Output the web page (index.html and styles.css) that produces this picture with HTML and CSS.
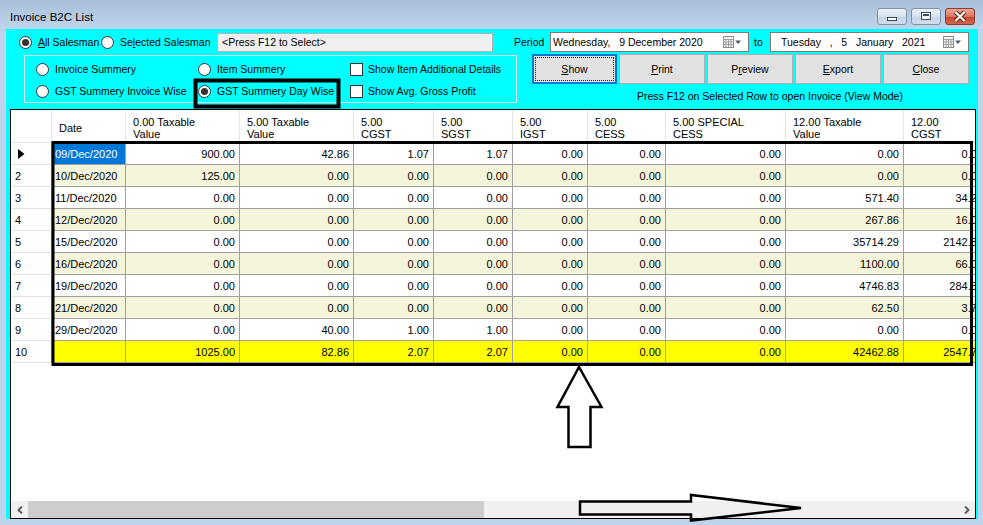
FILE: index.html
```html
<!DOCTYPE html>
<html>
<head>
<meta charset="utf-8">
<title>Invoice B2C List</title>
<link rel="stylesheet" href="styles.css">
</head>
<body>
<div class="window">
  <div class="titlebar">
    <span class="title">Invoice B2C List</span>
    <div class="caption">
      <div class="cbtn"><svg width="28" height="15" viewBox="0 0 28 15"><rect x="9.5" y="8.5" width="9" height="3" fill="#fff" stroke="#3a4a5e"/></svg></div>
      <div class="cbtn"><svg width="28" height="15" viewBox="0 0 28 15"><rect x="9.5" y="3.5" width="9" height="7" fill="#fff" stroke="#3a4a5e"/><rect x="11" y="5" width="6" height="2" fill="#3a4a5e"/></svg></div>
      <div class="cbtn close"><svg width="28" height="15" viewBox="0 0 28 15"><path d="M9.5 3 L18.5 12 M18.5 3 L9.5 12" stroke="#5b1c12" stroke-width="4.2"/><path d="M9.5 3 L18.5 12 M18.5 3 L9.5 12" stroke="#fff" stroke-width="2.2"/></svg></div>
    </div>
  </div>
  <div class="client">
    <div class="toprow">
      <label class="opt w1"><span class="radio on"></span><span><u>A</u>ll Salesman</span></label>
      <label class="opt w2"><span class="radio"></span><span>Se<u>l</u>ected Salesman</span></label>
      <div class="textbox">&lt;Press F12 to Select&gt;</div>
      <span class="period">Period</span>
      <div class="datebox"><span class="dtext d1">Wednesday,   9 December 2020</span><svg class="cal" width="19" height="12" viewBox="0 0 19 12"><rect x="0.5" y="0.5" width="10" height="11" fill="#f4f4f4" stroke="#8a8a8a"/><path d="M0.5 3.5H10.5M0.5 6H10.5M0.5 8.5H10.5M3 3.5V11.5M5.5 3.5V11.5M8 3.5V11.5" stroke="#a0a0a0" stroke-width="1"/><path d="M12 4.5 L18 4.5 L15 8 Z" fill="#4a5a70"/></svg></div>
      <span class="to">to</span>
      <div class="datebox"><span class="dtext d2">Tuesday   ,   5   January   2021</span><svg class="cal" width="19" height="12" viewBox="0 0 19 12"><rect x="0.5" y="0.5" width="10" height="11" fill="#f4f4f4" stroke="#8a8a8a"/><path d="M0.5 3.5H10.5M0.5 6H10.5M0.5 8.5H10.5M3 3.5V11.5M5.5 3.5V11.5M8 3.5V11.5" stroke="#a0a0a0" stroke-width="1"/><path d="M12 4.5 L18 4.5 L15 8 Z" fill="#4a5a70"/></svg></div>
    </div>
    <div class="secondrow">
      <div class="groupbox">
        <label class="opt"><span class="radio"></span><span>Invoice Summery</span></label>
        <label class="opt"><span class="radio"></span><span>Item Summery</span></label>
        <label class="opt chk"><span class="check"></span><span>Show Item Additional Details</span></label>
        <label class="opt"><span class="radio"></span><span>GST Summery Invoice Wise</span></label>
        <label class="opt"><span class="radio on"></span><span>GST Summery Day Wise</span></label>
        <label class="opt chk"><span class="check"></span><span>Show Avg. Gross Profit</span></label>
      </div>
      <div class="actions">
        <div class="btns">
          <div class="btn focus"><span><u>S</u>how</span></div>
          <div class="btn"><span><u>P</u>rint</span></div>
          <div class="btn"><span>P<u>r</u>eview</span></div>
          <div class="btn"><span><u>E</u>xport</span></div>
          <div class="btn"><span><u>C</u>lose</span></div>
        </div>
        <div class="note">Press F12 on Selected Row to open Invoice (View Mode)</div>
      </div>
    </div>
    <div class="grid">
      <div class="gridview">
        <table>
          <colgroup>
            <col class="c-rh"><col class="c-dt"><col class="c-114"><col class="c-114"><col class="c-80"><col class="c-79"><col class="c-75"><col class="c-78"><col class="c-120"><col class="c-118"><col class="c-last">
          </colgroup>
          <thead>
            <tr>
              <th class="rh"></th>
              <th>Date</th>
              <th>0.00 Taxable<br>Value</th>
              <th>5.00 Taxable<br>Value</th>
              <th>5.00<br>CGST</th>
              <th>5.00<br>SGST</th>
              <th>5.00<br>IGST</th>
              <th>5.00<br>CESS</th>
              <th>5.00 SPECIAL<br>CESS</th>
              <th>12.00 Taxable<br>Value</th>
              <th>12.00<br>CGST</th>
            </tr>
          </thead>
          <tbody>
            <tr class="odd"><td class="rh"><svg class="ptr" width="7" height="10" viewBox="0 0 7 10"><path d="M0 0 L6.5 5 L0 10 Z" fill="#000"/></svg></td><td class="dt sel">09/Dec/2020</td><td>900.00</td><td>42.86</td><td>1.07</td><td>1.07</td><td>0.00</td><td>0.00</td><td>0.00</td><td>0.00</td><td>0.00</td></tr>
            <tr class="even"><td class="rh">2</td><td class="dt">10/Dec/2020</td><td>125.00</td><td>0.00</td><td>0.00</td><td>0.00</td><td>0.00</td><td>0.00</td><td>0.00</td><td>0.00</td><td>0.00</td></tr>
            <tr class="odd"><td class="rh">3</td><td class="dt">11/Dec/2020</td><td>0.00</td><td>0.00</td><td>0.00</td><td>0.00</td><td>0.00</td><td>0.00</td><td>0.00</td><td>571.40</td><td>34.28</td></tr>
            <tr class="even"><td class="rh">4</td><td class="dt">12/Dec/2020</td><td>0.00</td><td>0.00</td><td>0.00</td><td>0.00</td><td>0.00</td><td>0.00</td><td>0.00</td><td>267.86</td><td>16.07</td></tr>
            <tr class="odd"><td class="rh">5</td><td class="dt">15/Dec/2020</td><td>0.00</td><td>0.00</td><td>0.00</td><td>0.00</td><td>0.00</td><td>0.00</td><td>0.00</td><td>35714.29</td><td>2142.86</td></tr>
            <tr class="even"><td class="rh">6</td><td class="dt">16/Dec/2020</td><td>0.00</td><td>0.00</td><td>0.00</td><td>0.00</td><td>0.00</td><td>0.00</td><td>0.00</td><td>1100.00</td><td>66.00</td></tr>
            <tr class="odd"><td class="rh">7</td><td class="dt">19/Dec/2020</td><td>0.00</td><td>0.00</td><td>0.00</td><td>0.00</td><td>0.00</td><td>0.00</td><td>0.00</td><td>4746.83</td><td>284.81</td></tr>
            <tr class="even"><td class="rh">8</td><td class="dt">21/Dec/2020</td><td>0.00</td><td>0.00</td><td>0.00</td><td>0.00</td><td>0.00</td><td>0.00</td><td>0.00</td><td>62.50</td><td>3.75</td></tr>
            <tr class="odd"><td class="rh">9</td><td class="dt">29/Dec/2020</td><td>0.00</td><td>40.00</td><td>1.00</td><td>1.00</td><td>0.00</td><td>0.00</td><td>0.00</td><td>0.00</td><td>0.00</td></tr>
            <tr class="total"><td class="rh">10</td><td class="dt"></td><td>1025.00</td><td>82.86</td><td>2.07</td><td>2.07</td><td>0.00</td><td>0.00</td><td>0.00</td><td>42462.88</td><td>2547.77</td></tr>
          </tbody>
        </table>
      </div>
      <div class="hscroll">
        <div class="sbtn"><svg width="6" height="8" viewBox="0 0 6 8"><path d="M5 0.5 L1.5 4 L5 7.5" fill="none" stroke="#606060" stroke-width="2"/></svg></div>
        <div class="thumb"></div>
        <div class="track"></div>
        <div class="sbtn"><svg width="6" height="8" viewBox="0 0 6 8"><path d="M1 0.5 L4.5 4 L1 7.5" fill="none" stroke="#606060" stroke-width="2"/></svg></div>
      </div>
    </div>
  </div>
  <svg class="annot" width="983" height="525" viewBox="0 0 983 525">
    <rect x="195.5" y="80.5" width="143" height="26" fill="none" stroke="#000" stroke-width="4"/>
    <rect x="53" y="142.5" width="918.5" height="222" fill="none" stroke="#000" stroke-width="3"/>
    <path d="M579 367 L601.5 407 L590.5 407 L590.5 447 L568.5 447 L568.5 407 L557.5 407 Z" fill="none" stroke="#000" stroke-width="2.5" stroke-linejoin="miter"/>
    <path d="M580 501.5 L691 501.5 L691 495 L801 508 L691 520.5 L691 514.5 L580 514.5 Z" fill="none" stroke="#000" stroke-width="2.5" stroke-linejoin="miter"/>
  </svg>
</div>
</body>
</html>
```

FILE: styles.css
```css
* { box-sizing: border-box; }
html, body { margin: 0; padding: 0; }
body {
  width: 983px;
  height: 525px;
  overflow: hidden;
  font-family: "Liberation Sans", Arial, sans-serif;
  font-size: 11px;
  color: #000;
}
.window {
  position: relative;
  width: 983px;
  height: 525px;
  background: #bdd4eb;
  display: flex;
  flex-direction: column;
}
.titlebar {
  height: 29px;
  flex: none;
  display: flex;
  align-items: flex-start;
  background: linear-gradient(#a8bfd9, #bfd5ec);
}
.title {
  margin: 10px 0 0 10px;
  font-size: 11.5px;
  line-height: 14px;
}
.caption {
  margin: 8px 8px 0 auto;
  display: flex;
  gap: 4px;
}
.cbtn {
  width: 30px;
  height: 17px;
  border: 1px solid #7f93ad;
  border-radius: 3px;
  background: linear-gradient(#eef3f9, #d6e2ef 50%, #c4d4e7 51%, #d0ddec);
}
.cbtn svg { display: block; }
.cbtn.close {
  border-color: #8c3b2e;
  background: linear-gradient(#eba998, #d9735d 50%, #c6452d 51%, #d3654d);
}
.client {
  flex: 1;
  margin: 0 5px 6px 6px;
  background: #00ffff;
  display: flex;
  flex-direction: column;
}

/* top row */
.toprow {
  margin-top: 3px;
  height: 20px;
  flex: none;
  display: flex;
  align-items: center;
  padding-left: 13px;
  font-size: 10.5px;
}
.opt {
  display: flex;
  align-items: center;
  gap: 6px;
  white-space: nowrap;
}
.w1 { width: 82px; }
.w2 { width: 116px; }
.radio {
  width: 13px;
  height: 13px;
  flex: none;
  border: 1px solid #333;
  border-radius: 50%;
  background: #fff;
  display: flex;
  align-items: center;
  justify-content: center;
}
.radio.on::after {
  content: "";
  width: 7px;
  height: 7px;
  border-radius: 50%;
  background: #333;
}
.check {
  width: 13px;
  height: 13px;
  flex: none;
  border: 1px solid #333;
  background: #fff;
}
.textbox {
  width: 276px;
  height: 19px;
  border: 1px solid #b4b4b4;
  background: #f0f0f0;
  padding-left: 4px;
  line-height: 17px;
}
.period {
  margin-left: 21px;
  width: 36px;
}
.datebox {
  width: 199px;
  height: 20px;
  border: 1px solid #7a7a7a;
  background: #fff;
  display: flex;
  align-items: center;
}
.dtext {
  flex: 1;
  white-space: pre;
}
.d1 { padding-left: 2px; }
.d2 { padding-left: 10px; }
.cal {
  display: block;
  margin-right: 6px;
}
.to {
  width: 21px;
  padding-left: 5px;
}

/* second row */
.secondrow {
  margin-top: 2px;
  height: 50px;
  flex: none;
  display: flex;
  font-size: 10.5px;
}
.groupbox {
  margin: 1px 0 0 18px;
  width: 493px;
  height: 48px;
  border: 1px solid #d8e4e4;
  padding: 2px 0 0 11px;
  display: grid;
  grid-template-columns: 162px 152px auto;
  grid-template-rows: 22px 22px;
}
.opt.chk { gap: 5px; }
.actions {
  margin-left: 15px;
  display: flex;
  flex-direction: column;
}
.btns {
  display: flex;
  gap: 2px;
}
.btn {
  position: relative;
  width: 86px;
  height: 30px;
  border: 1px solid #adadad;
  background: #e1e1e1;
  display: flex;
  align-items: center;
  justify-content: center;
}
.btn.focus {
  width: 85px;
  border: 2px solid #0078d7;
}
.btn.focus::after {
  content: "";
  position: absolute;
  inset: 1px;
  border: 1px dotted #5a0a0a;
}
.note {
  margin-top: 4px;
  line-height: 16px;
  padding-left: 105px;
  white-space: nowrap;
}

/* grid */
.grid {
  margin: 5px 0 0 4px;
  width: 966px;
  height: 410px;
  flex: none;
  border: 1px solid #000;
  background: #fff;
  display: flex;
  flex-direction: column;
}
.gridview {
  flex: 1;
  overflow: hidden;
}
table {
  border-collapse: separate;
  border-spacing: 0;
  table-layout: fixed;
  width: 977px;
}
.c-rh { width: 41px; }
.c-dt { width: 74px; }
.c-114 { width: 114px; }
.c-80 { width: 80px; }
.c-79 { width: 79px; }
.c-75 { width: 75px; }
.c-78 { width: 78px; }
.c-120 { width: 120px; }
.c-118 { width: 118px; }
.c-last { width: 84px; }
th {
  height: 33px;
  padding: 3px 0 0 7px;
  font-weight: normal;
  text-align: left;
  vertical-align: middle;
  line-height: 12px;
  background: #fff;
  border-right: 1px solid #e3e3e3;
  border-bottom: 1px solid #e3e3e3;
  white-space: nowrap;
  overflow: hidden;
}
td {
  height: 22px;
  padding: 1px 4px 0 4px;
  text-align: right;
  white-space: nowrap;
  overflow: hidden;
  color: #000;
  border-right: 1px solid #a0a0a0;
  border-bottom: 1px solid #a0a0a0;
  line-height: 20px;
}
td.rh {
  text-align: left;
  background: #fff;
  border-bottom-color: #e3e3e3;
  padding-left: 4px;
}
td.dt {
  text-align: left;
  padding-left: 3px;
}
.ptr {
  display: block;
  margin-left: 3px;
}
tr.odd td { background: #fff; }
tr.even td { background: #f5f5dc; }
tr.even td.rh { background: #fff; }
tr.total td { background: #ffff00; }
tr.total td.rh { background: #fff; }
td.sel {
  background: #0078d7 !important;
  color: #fff;
}
.hscroll {
  height: 17px;
  flex: none;
  display: flex;
  background: #f0f0f0;
}
.sbtn {
  width: 17px;
  display: flex;
  align-items: center;
  justify-content: center;
}
.sbtn svg { display: block; }
.thumb {
  width: 456px;
  background: #cdcdcd;
}
.track { flex: 1; }

.annot {
  position: absolute;
  left: 0;
  top: 0;
  pointer-events: none;
}
```
